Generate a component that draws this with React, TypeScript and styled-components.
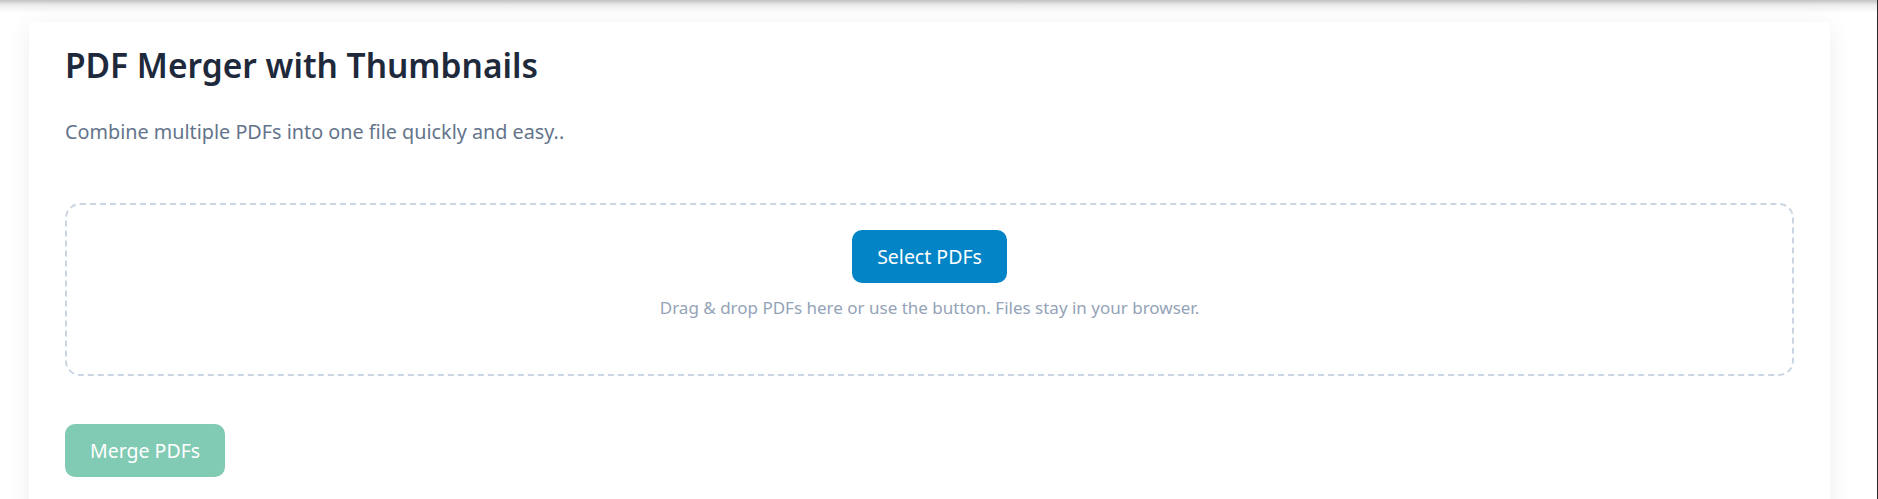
import React from 'react';
import styled, { createGlobalStyle } from 'styled-components';

const GlobalStyle = createGlobalStyle`
  html, body {
    margin: 0;
    padding: 0;
    background: #ffffff;
  }
  body {
    font-family: 'Noto Sans', 'Open Sans', sans-serif;
    -webkit-font-smoothing: antialiased;
  }
`;

const Viewport = styled.div`
  min-height: 499px;
  box-sizing: border-box;
  padding-top: 22px;
  border-right: 1px solid #2a2a2a;
  background: linear-gradient(to bottom, #c2c2c2 0px, #ececec 5px, #ffffff 13px);
  overflow: hidden;
`;

const Card = styled.main`
  margin: 0 47px 0 29px;
  padding: 20px 36px 36px;
  min-height: 520px;
  background: #ffffff;
  border-radius: 4px;
  box-shadow: 0 4px 24px rgba(15, 23, 42, 0.07);
`;

const Title = styled.h1`
  margin: 0;
  font-size: 33.5px;
  line-height: 46px;
  font-weight: 600;
  color: #1e293b;
`;

const Subtitle = styled.p`
  margin: 29px 0 0;
  font-size: 19.8px;
  line-height: 30px;
  color: #64748b;
`;

const DropZone = styled.section`
  margin-top: 56px;
  height: 173px;
  box-sizing: border-box;
  padding: 25px;
  border: 2px dashed #cbd5e1;
  border-radius: 15px;
  display: flex;
  flex-direction: column;
  align-items: center;
  gap: 12px;
`;

const Button = styled.button<{ $tone: 'primary' | 'success'; $disabled?: boolean }>`
  height: 53px;
  padding: 0 25px;
  border: none;
  border-radius: 10px;
  font-family: inherit;
  font-size: 19.5px;
  color: #ffffff;
  background: ${(p) => (p.$tone === 'primary' ? '#0284c7' : '#059669')};
  opacity: ${(p) => (p.$disabled ? 0.5 : 1)};
  cursor: ${(p) => (p.$disabled ? 'not-allowed' : 'pointer')};
`;

const Hint = styled.p`
  margin: 0;
  font-size: 17px;
  line-height: 26px;
  color: #94a3b8;
`;

const Actions = styled.div`
  margin-top: 48px;
  display: flex;
  gap: 12px;
`;

export default function App() {
  return (
    <>
      <GlobalStyle />
      <Viewport>
        <Card>
          <Title>PDF Merger with Thumbnails</Title>
          <Subtitle>Combine multiple PDFs into one file quickly and easy..</Subtitle>
          <DropZone>
            <Button $tone="primary">Select PDFs</Button>
            <Hint>Drag &amp; drop PDFs here or use the button. Files stay in your browser.</Hint>
          </DropZone>
          <Actions>
            <Button $tone="success" $disabled disabled>
              Merge PDFs
            </Button>
          </Actions>
        </Card>
      </Viewport>
    </>
  );
}
